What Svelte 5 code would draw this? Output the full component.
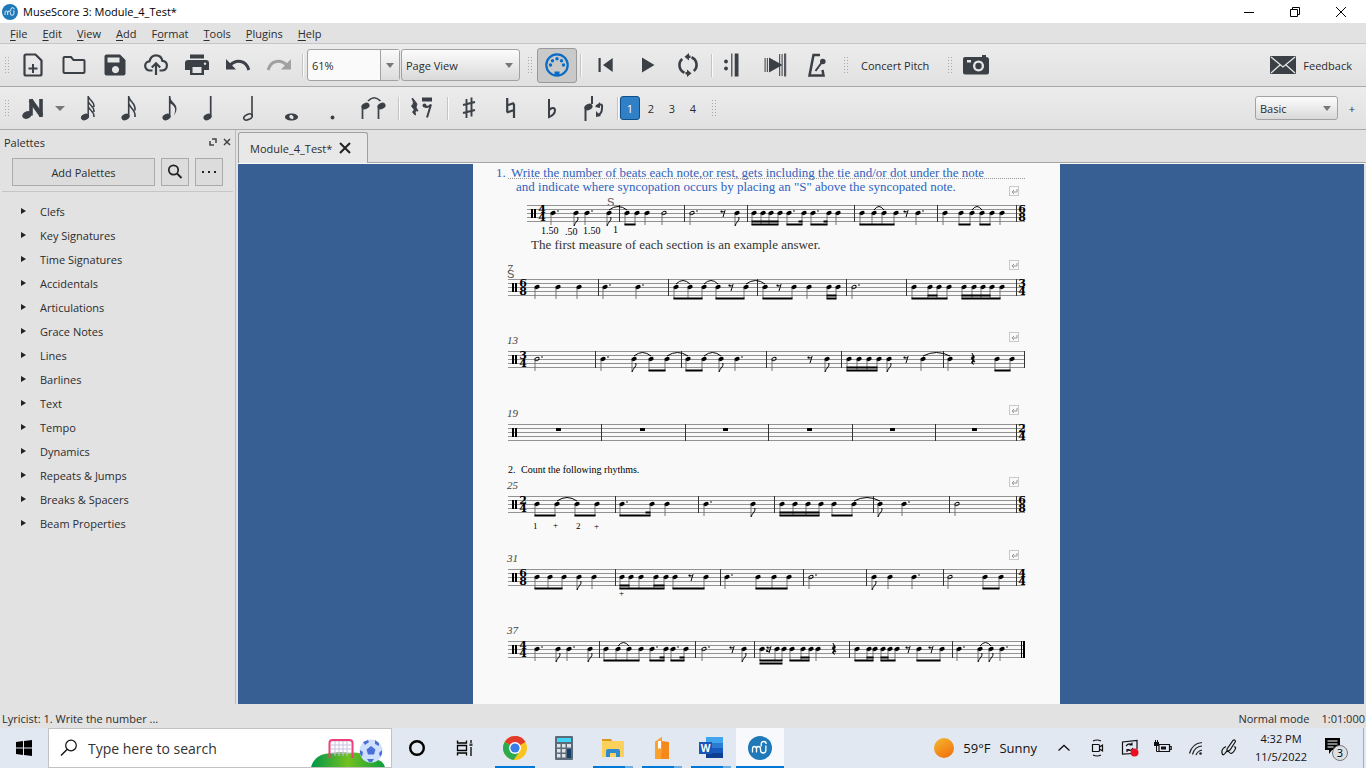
<script lang="ts">
  type System = {
    y: number;
    x?: number;
    num?: string;
    sig?: string;
    next?: string;
    bars: number[];
    notes: string;
    beams?: number[][];
    ties?: number[][];
    end?: boolean;
  };

  const menus = ["File", "Edit", "View", "Add", "Format", "Tools", "Plugins", "Help"];
  const accel: Record<string, number> = { Format: 1 };

  const palettes = [
    "Clefs", "Key Signatures", "Time Signatures", "Accidentals", "Articulations",
    "Grace Notes", "Lines", "Barlines", "Text", "Tempo", "Dynamics",
    "Repeats & Jumps", "Breaks & Spacers", "Beam Properties",
  ];

  const fileTools = ["new", "open", "save", "cloud", "print", "undo", "redo"];
  const playTools = ["rewind", "play", "loop"];
  const viewTools = ["repeat", "pan", "metronome"];
  const durations = ["n32", "n16", "n8", "n4", "n2", "n1", "dot", "tie"];
  const accidentals = ["sharp", "natural", "flat", "flip"];
  const tasks = [
    { id: "cortana" }, { id: "taskview" }, { id: "chrome", open: true }, { id: "calc" },
    { id: "folder", open: true, stack: true }, { id: "office", open: true, stack: true },
    { id: "word", open: true, stack: true }, { id: "muse", open: true, active: true },
  ];
  const tray = ["up", "meet", "sync", "battery", "wifi", "pen"];

  let voice = $state(1);
  let zoom = $state("61%");

  const ink = "#3b3f46";
  const head = (x: number, y: number) =>
    `<ellipse cx="${x}" cy="${y}" rx="4.2" ry="3.1" transform="rotate(-24 ${x} ${y})"/>`;

  // 24x24 glyphs
  const icons: Record<string, string> = {
    new: `<path d="M5 1.500h9.5L20.500 7.500v13.500q0 1.500-1.500 1.500H5q-1.500 0-1.500-1.500V3q0-1.500 1.500-1.500z" fill="none" stroke="${ink}" stroke-width="2.200"/><path d="M12 11v9M7.500 15.500h9" stroke="${ink}" stroke-width="2"/>`,
    open: `<path d="M2.500 4h6.500l2.500 3h10q1 0 1 1v11q0 1-1 1h-19q-1 0-1-1V5q0-1 1-1z" fill="none" stroke="${ink}" stroke-width="2"/>`,
    save: `<path fill-rule="evenodd" d="M3.500 1.500H17L22.500 7v13.500q0 2-2 2h-17q-2 0-2-2v-17q0-2 2-2zM4.500 4.500v5h12v-5zM12.500 13a3.600 3.600 0 1 0 .01 0z"/>`,
    cloud: `<path d="M8.500 17.500H6a4.600 4.600 0 0 1-.5-9.200C6.500 4 9 2.300 12 2.300s5.700 2 6.300 5.500c3 .2 4.600 2.300 4.600 4.800 0 2.900-2 4.900-4.900 4.900h-2.500" fill="none" stroke="${ink}" stroke-width="2.200"/><path d="M12 22V11M7.800 14.500 12 10.300l4.200 4.200" fill="none" stroke="${ink}" stroke-width="2.200"/>`,
    print: `<path d="M5 1.500h14v4H5z"/><path fill-rule="evenodd" d="M3 7h18q3 0 3 3v7h-5v5H5v-5H0v-7q0-3 3-3zM7.500 14v6h9v-6zM20 9.500a1.200 1.200 0 1 0 .01 0z"/>`,
    undo: `<path d="M0 6v10.500h10z"/><path d="M4 12.500C10 6 20 7 22.800 17" fill="none" stroke="${ink}" stroke-width="3"/>`,
    redo: `<g fill="#a0a0a0"><path d="M24 6v10.500H14z"/><path d="M20 12.500C14 6 4 7 1.200 17" fill="none" stroke="#a0a0a0" stroke-width="3"/></g>`,
    midi: `<g fill="#0a6cc4"><circle cx="12" cy="12" r="10.700" fill="none" stroke="#0a6cc4" stroke-width="2.200"/><circle cx="5.500" cy="12" r="1.700"/><circle cx="7.500" cy="7.800" r="1.700"/><circle cx="12" cy="5.800" r="1.700"/><circle cx="16.500" cy="7.800" r="1.700"/><circle cx="18.500" cy="12" r="1.700"/><path d="M9.500 18.500h5V23h-5z"/></g>`,
    rewind: `<path d="M4.500 5h2.200v14H4.500zM18.700 5v14L9 12z"/>`,
    play: `<path d="M7 4.500v15L19.500 12z"/>`,
    loop: `<path d="M8.500 19.800A8.300 8.300 0 0 1 6.200 6M15.500 4.200A8.300 8.300 0 0 1 17.800 18M9.500 20.300h3M14.500 3.700h-3" fill="none" stroke="${ink}" stroke-width="2.600"/><path d="M13 0v7.500L8.500 3.700zM11 24v-7.500l4.500 3.800z"/>`,
    repeat: `<circle cx="1" cy="8.500" r="1.900"/><circle cx="1" cy="15.500" r="1.900"/><path d="M6 .5h1.500v23H6z" opacity=".8"/><path d="M9.700.5h3.800v23H9.700z"/>`,
    pan: `<path d="M3 4.500v15L16.500 12z"/><path d="M-1.500 5h1.200v14h-1.200zM.8 5H2v14H.8zM13 1h1.200v22H13zM15.500 1h1.200v22h-1.200zM18 .5h2.200v23H18z" opacity=".85"/>`,
    metronome: `<path d="M13 2H6.500L2.500 22.500h14l-1-5.500" fill="none" stroke="${ink}" stroke-width="2.500"/><path d="M8.500 18 16.500 7" stroke="${ink}" stroke-width="2"/><circle cx="15.800" cy="8.500" r="2.800"/>`,
    camera: `<path fill-rule="evenodd" d="M1 4h17V2h4v2q3 0 3 2.500v13q0 2-2 2H1q-2 0-2-2V6q0-2 2-2zM3 7v2.500h4V7zM14.500 7.500a5.500 5.500 0 1 0 .01 0z"/><circle cx="14.500" cy="13" r="3.200"/>`,
    N: `<path d="M10 19.500V3M20 21V3" stroke="${ink}" stroke-width="3.600"/><path d="M9.500 4 20.500 19.500" stroke="${ink}" stroke-width="4.600"/><ellipse cx="6" cy="19" rx="5" ry="3.600" transform="rotate(-25 6 19)"/>`,
    n32: `${head(9, 21)}<path d="M12.200 21V0M12.500 1c1 3.500 6 4 5.500 10M12.500 6c1 3.500 6 4 5.500 10M12.500 11c1 3.500 6 4 5.500 10" fill="none" stroke="${ink}" stroke-width="1.500"/>`,
    n16: `${head(8.500, 21)}<path d="M11.700 21V0M12 1.500c1 4.500 7 5.500 6 13M12 8c1 4.500 7 5.500 6 13" fill="none" stroke="${ink}" stroke-width="1.600"/>`,
    n8: `${head(8.500, 21)}<path d="M11.700 21V0" stroke="${ink}" stroke-width="1.600"/><path d="M12 1c1 5 6.500 6.500 6.500 11.500 0 3.500-1.500 5-2.500 7 .5-2.500 1.500-4 1-7C16 9.500 13.500 8 12 7.500z"/>`,
    n4: `${head(8.500, 21)}<path d="M11.700 21V0" stroke="${ink}" stroke-width="1.700"/>`,
    n2: `<ellipse cx="8" cy="21" rx="4.500" ry="2.600" transform="rotate(-26 8 21)" fill="none" stroke="${ink}" stroke-width="1.600"/><path d="M12 20V0" stroke="${ink}" stroke-width="1.600"/>`,
    n1: `<path fill-rule="evenodd" d="M10.500 17.500c3.500 0 6.500 1.300 6.500 3.500s-3 3.500-6.500 3.500S4 23.200 4 21s3-3.500 6.500-3.500zm-.8 1.200c-2 .5-2 3.500 1.500 4.500 2-.5 2-3.800-1.500-4.500z"/>`,
    dot: `<circle cx="10.500" cy="21.500" r="1.900"/>`,
    tie: `<g transform="translate(-2 0)">${head(4.500, 10)}${head(20.500, 10)}<path d="M1.500 10.500V23M17.500 10.500V23M7 5q6-6.500 12.500 0" fill="none" stroke="${ink}" stroke-width="1.700"/></g>`,
    rest: `<g transform="translate(-1 0)"><path d="M1.500 2 6 8q-2.500 3 1 7-4-1-2.500 4-5-3-1-5L.5 10Q4 7 1 3z" stroke="${ink}"/><path d="M11 1.500h10v4H11z"/><circle cx="13.500" cy="9.500" r="2"/><path d="M14 11q4 .5 6-2.500L16 21.500" fill="none" stroke="${ink}" stroke-width="2"/></g>`,
    sharp: `<path d="M5.500 3v19M10.500 1.500v19M2 9l12-3M2 17l12-3" fill="none" stroke="${ink}" stroke-width="1.900"/>`,
    natural: `<path d="M5.200 2v14.500M12 7.500V22M5 9.500l7-2.500M5 16.500l7-2.500" fill="none" stroke="${ink}" stroke-width="2.200"/>`,
    flat: `<path d="M6 3v18q6-2.500 6-6.500c0-3-3.500-3.500-5.500-.5" fill="none" stroke="${ink}" stroke-width="2"/>`,
    flip: `${head(4.500, 11)}<path d="M1.500 11v14M8 0v8" stroke="${ink}" stroke-width="2"/><path d="M12 10q7-4 6 2 0 6-4 7" fill="none" stroke="${ink}" stroke-width="2"/><path d="M16 6v6l-5-1zM12 15v6l5-1z"/>`,
    search: `<circle cx="10.500" cy="10" r="4.700" fill="none" stroke="#222" stroke-width="1.700"/><path d="m14 13.500 4.500 4.500" stroke="#222" stroke-width="2"/>`,
    more: `<path d="M5 11h2v2H5zM11 11h2v2h-2zM17 11h2v2h-2z" fill="#222"/>`,
    cortana: `<circle cx="12" cy="12" r="6.800" fill="none" stroke="#000" stroke-width="2.400"/>`,
    taskview: `<path d="M3.500 4.500V7h9V4.500M3.500 19.500V17h9v2.500M3.500 9.500h9v5h-9zM17 4v3M17 11v9" fill="none" stroke="#000" stroke-width="1.300"/><path d="M15.500 7.500h3V10h-3z"/>`,
    chrome: `<circle cx="12" cy="12" r="12" fill="#f9c51c"/><path d="M12 12 1.600 6A12 12 0 0 1 22.400 6z" fill="#e33b2e"/><path d="M12 12 1.600 6a12 12 0 0 0 9 17.900L17 15z" fill="#2da94f"/><path d="M12 6h10.400A12 12 0 0 0 12 0z" fill="#e33b2e"/><circle cx="12" cy="12" r="6" fill="#fff"/><circle cx="12" cy="12" r="4.600" fill="#3a7de8"/>`,
    calc: `<rect x="3" width="18" height="24" rx="1" fill="#5d6b78"/><path d="M5 2h14v4H5z" fill="#3fd3f5"/><g fill="#dde3e8"><path d="M5 8h3.500v3.500H5zM10 8h3.500v3.500H10zM15 8h4v3.500h-4zM5 13h3.500v3.500H5zM10 13h3.500v3.500H10zM5 18h3.500v3.500H5zM10 18h3.500v3.500H10z"/></g><path d="M15 13h4v9h-4z" fill="#123f6b"/>`,
    folder: `<path d="M1 3h9l2 3H1z" fill="#d99a1b"/><path d="M1 5h22v16H1z" fill="#fbd15b"/><path d="M5 21v-6q0-2 2-2h10q2 0 2 2v6h-4v-4H9v4z" fill="#2f8bd0"/>`,
    office: `<path d="M5 6 12 1v4l7 1v17H5z" fill="#f58a1c"/><path d="M5 6 12 1v5l-1 17H5z" fill="#fca12b"/><path d="M8 5h3v8l-1.500-1L8 13z" fill="#fff"/>`,
    word: `<path d="M7 1h17v6H7z" fill="#41a5ee"/><path d="M7 7h17v5H7z" fill="#2b7cd3"/><path d="M7 12h17v5H7z" fill="#185abd"/><path d="M7 17h17v5H7z" fill="#103f91"/><path d="M0 6h13v12H0z" fill="#1a55b8"/><text x="6.500" y="15.500" font-family="Open Sans, sans-serif" font-size="10" font-weight="700" text-anchor="middle" fill="#fff">W</text>`,
    muse: `<circle cx="12" cy="12" r="12" fill="#1f78b8"/><path d="M4.500 16.500V13q0-2.500 2-2.500t2 2.500v3.500M8.500 13q0-2.500 2-2.500t2 2.500v1q0 3 2.700 3t2.700-3V9.500M13.200 10.500V8.500q0-3 2.500-3t2.500 2.500" fill="none" stroke="#fff" stroke-width="1.300"/>`,
    up: `<path d="m6.500 14.500 5.500-5 5.500 5" fill="none" stroke="#111" stroke-width="1.300"/>`,
    meet: `<path d="M7.500 8.500h6q1 0 1 1v5q0 1-1 1h-6zM14.500 11l3-2v6l-3-2M8 5q4-2 8 0M8 19q4 2 8 0" fill="none" stroke="#111" stroke-width="1.200"/>`,
    sync: `<path d="M15 17.500 4.500 18V6L19 4.500V13" fill="none" stroke="#111" stroke-width="1.200"/><path d="M8 10q3-3.500 6-1M15 12q-2.500 4-6 1.500M14 6.500V9h-2.500M9 16v-2.500h2.500" fill="none" stroke="#111" stroke-width="1.200"/><circle cx="16.500" cy="16.500" r="4" fill="#e81123"/>`,
    battery: `<path d="M8 8.500h10.500v7H8zM19 10.500h1.200v3H19" fill="none" stroke="#111" stroke-width="1.200"/><path d="M10 10.500h5v3h-5zM3 6h5v4H3z" fill="#111"/><path d="M4.500 4v2M6.500 4v2M5.500 10v5.500h3" fill="none" stroke="#111"/>`,
    wifi: `<path d="M5.500 17.500Q8 7.500 18 6.500M8.500 18.500Q10.500 10.500 18 10M12 19q1.500-4 6-5" fill="none" stroke="#222" stroke-width="1.200"/><circle cx="16.500" cy="17.500" r="1.300" fill="#222"/>`,
    pen: `<path d="m10 13 6-8.500q2-1.500 2.500 1L13 14l-3 1.500zM9 10.500q-5 2.500-4 6.500t4-1q1.500-2 3.500.5t5-2q2.500-4-.5-3.500" fill="none" stroke="#111" stroke-width="1.200"/>`,
  };

  const systems: System[] = [
    {
      y: 213, x: 527, sig: "44", next: "68",
      bars: [619, 684, 747, 854, 937, 1016],
      notes: "q.553 e576 q.587 e609 n627 n637 q647 h664 h.692 r723 e737 n754 n763 n771 n780 n.789 n804 n.813 n829 q838 n862 n874 n884 n896 r906 q.918 q945 n961 n972 n982 n992 q1002",
      beams: [[627, 637], [754, 780], [754, 780, 1], [789, 804], [801, 804, 1], [813, 829], [826, 829, 1], [862, 896], [961, 972], [982, 992]],
      ties: [[609, 627], [874, 884], [972, 982]],
    },
    {
      y: 287, num: "7", sig: "68", next: "34",
      bars: [598, 668, 757, 846, 906, 1016],
      notes: "q537 q558 q579 q.605 q.638 n676 n690 n704 n718 r731 n746 n765 r779 n794 q809 n829 n838 h.854 n914 n930 n939 n949 n964 n974 n983 n992 n1002",
      beams: [[676, 704], [718, 746], [765, 794], [829, 838], [829, 838, 1], [914, 949], [930, 939, 1], [964, 1002], [964, 992, 1]],
      ties: [[676, 690], [704, 718], [746, 765]],
    },
    {
      y: 359, num: "13", sig: "34",
      bars: [595, 681, 766, 841, 943, 1024],
      notes: "h.537 q.603 e634 n651 n667 n688 n704 e721 q.737 h774 r810 e827 n849 n859 n869 n879 e889 r906 q923 q950 R973 n997 n1012",
      beams: [[651, 667], [688, 704], [849, 879], [849, 879, 1], [997, 1012]],
      ties: [[634, 651], [667, 688], [704, 721], [923, 950]],
    },
    {
      y: 432, num: "19", next: "24",
      bars: [601, 685, 768, 852, 935, 1016],
      notes: "w559 w643 w726 w810 w893 w975",
    },
    {
      y: 504, num: "25", sig: "24", next: "68",
      bars: [615, 698, 774, 873, 949, 1016],
      notes: "n537 n557 n577 n597 n.622 n652 q667 q.706 e753 n782 n795 n808 n821 n834 n854 e880 q.904 h957",
      beams: [[537, 557], [577, 597], [622, 652], [648, 652, 1], [782, 821], [782, 821, 1], [834, 854]],
      ties: [[557, 577], [854, 880]],
    },
    {
      y: 577, num: "31", sig: "68", next: "44",
      bars: [615, 720, 803, 866, 943, 1016],
      notes: "n537 n550 n564 e579 q594 n622 n631 n641 n656 n666 n675 r691 n706 q.727 n758 n774 n789 h.811 e874 q890 q.914 h950 n985 n1001",
      beams: [[537, 564], [622, 666], [622, 631, 1], [656, 666, 1], [675, 706], [758, 789], [985, 1001]],
    },
    {
      y: 649, num: "37", sig: "44", end: true,
      bars: [599, 695, 754, 849, 952],
      notes: "q.537 e558 q.569 e590 n606 n618 n629 n641 n.652 n666 n.673 n686 h.704 r732 e744 n762 s769 n777 n784 n792 n803 n811 q818 R834 n857 n869 n875 n883 n890 n897 r908 n919 r931 n942 q.959 e980 e991 q.1002",
      beams: [[606, 641], [652, 666], [662, 666, 1], [673, 686], [682, 686, 1], [762, 784], [762, 784, -1], [792, 811], [803, 811, 1], [857, 875], [869, 875, 1], [883, 897], [883, 890, 1], [919, 942]],
      ties: [[618, 629], [980, 991]],
    },
  ];

  const parse = (s: string) =>
    [...s.matchAll(/([a-zR])(\.?)(\d+)/g)].map((m) => ({ kind: m[1], dotted: m[2] === ".", x: +m[3] }));
</script>

{#snippet icon(name: string, size = 24)}
  <svg class="icon" width={size} height={size} viewBox="0 0 24 24" aria-hidden="true">{@html icons[name]}</svg>
{/snippet}

{#snippet tool(name: string)}
  <button class="tool" aria-label={name}>{@render icon(name)}</button>
{/snippet}

{#snippet timesig(sig: string, x: number, y: number)}
  <text class="sig" {x} {y}>{sig[0]}</text>
  <text class="sig" {x} y={y + 8}>{sig[1]}</text>
{/snippet}

<div class="window">
  <header class="titlebar">
    {@render icon("muse", 16)}
    <h1>MuseScore 3: Module_4_Test*</h1>
    <div class="winbtns">
      <button aria-label="Minimize"><svg width="12" height="12"><path d="M1 6.500h10" /></svg></button>
      <button aria-label="Restore"><svg width="12" height="12"><path d="M1.500 3.500h7v7h-7zM3.500 3.500v-2h7v7h-2" /></svg></button>
      <button aria-label="Close"><svg width="12" height="12"><path d="m1 1 10 10M11 1 1 11" /></svg></button>
    </div>
  </header>

  <nav class="menubar">
    {#each menus as m}
      {@const k = accel[m] ?? 0}
      <button>{m.slice(0, k)}<u>{m[k]}</u>{m.slice(k + 1)}</button>
    {/each}
  </nav>

  <div class="toolbar">
    <span class="grip"></span>
    {#each fileTools as t}{@render tool(t)}{/each}
    <span class="sep"></span>
    <div class="combo">
      <input aria-label="Zoom" bind:value={zoom} />
      <button aria-label="Zoom levels"><i class="tri"></i></button>
    </div>
    <div class="select view">
      <select aria-label="View mode"><option>Page View</option></select><i class="tri"></i>
    </div>
    <span class="grip wide"></span>
    <button class="midi" aria-label="MIDI input" aria-pressed="true">{@render icon("midi")}</button>
    <span class="sep"></span>
    {#each playTools as t}{@render tool(t)}{/each}
    <span class="sep"></span>
    {#each viewTools as t}{@render tool(t)}{/each}
    <span class="grip"></span>
    <button class="plain">Concert Pitch</button>
    <span class="grip"></span>
    {@render tool("camera")}
    <button class="feedback">
      <svg width="26" height="18" aria-hidden="true"><rect width="26" height="18" rx="1" /><path d="m1 1 12 10L25 1M1 17l9-8M25 17l-9-8" fill="none" stroke="#e6e6e6" stroke-width="1.300" /></svg>
      Feedback
    </button>
  </div>

  <div class="toolbar">
    <span class="grip"></span>
    {@render tool("N")}
    <button class="drop" aria-label="Input mode"><i class="tri big"></i></button>
    {#each durations as t}{@render tool(t)}{/each}
    <span class="sep"></span>
    {@render tool("rest")}
    <span class="sep"></span>
    {#each accidentals as t}{@render tool(t)}{/each}
    <span class="sep thin"></span>
    {#each [1, 2, 3, 4] as v}
      <button class="voice" class:on={voice === v} onclick={() => (voice = v)}>{v}</button>
    {/each}
    <span class="grip wide"></span>
    <div class="select workspace">
      <select aria-label="Workspace"><option>Basic</option></select><i class="tri"></i>
    </div>
    <button class="add" aria-label="Add workspace">+</button>
  </div>

  <main>
    <aside>
      <div class="dock">
        <h2>Palettes</h2>
        <button aria-label="Float"><svg width="8" height="8"><path d="M3 1h4v4M1 3v4h4" /></svg></button>
        <button aria-label="Close palettes"><svg width="8" height="8"><path d="m1 1 6 6M7 1 1 7" /></svg></button>
      </div>
      <div class="actions">
        <button class="grow">Add Palettes</button>
        <button aria-label="Search">{@render icon("search")}</button>
        <button aria-label="More">{@render icon("more")}</button>
      </div>
      <ul>
        {#each palettes as p}
          <li><button><i></i>{p}</button></li>
        {/each}
      </ul>
    </aside>

    <section class="editor">
      <div class="tabs">
        <div class="tab">
          <span>Module_4_Test*</span>
          <button aria-label="Close tab"><svg width="12" height="12"><path d="m1 1 10 10M11 1 1 11" /></svg></button>
        </div>
      </div>
      <div class="canvas">
        <svg class="page" viewBox="473 164 587 540" width="587" height="540">
          <g class="lyricist">
            <text x="496" y="177">1.</text>
            <text x="511" y="177">Write the number of beats each note,or rest, gets including the tie and/or dot under the note</text>
            <text x="516" y="191">and indicate where syncopation occurs by placing an "S" above the syncopated note.</text>
          </g>
          <path d="M508 178.500H1025" stroke="#999" stroke-dasharray="1 1" />
          <text class="note" x="531" y="249">The first measure of each section is an example answer.</text>
          <text class="mark" x="607" y="206">S</text>
          <text class="mark" x="507" y="278">S</text>
          <g class="count">
            <text x="541" y="234">1.50</text>
            <text x="565" y="235">.50</text>
            <text x="583" y="234">1.50</text>
            <text x="613" y="233">1</text>
            <text class="sm" x="533" y="529">1</text>
            <text class="sm" x="553" y="528">+</text>
            <text class="sm" x="576" y="529">2</text>
            <text class="sm" x="594" y="529">+</text>
            <text class="sm" x="619" y="596">+</text>
            <text x="508" y="473">2.</text>
            <text x="521" y="473">Count the following rhythms.</text>
          </g>

          {#each systems as s}
            {@const x0 = s.x ?? 508}
            {#if s.num}<text class="num" x="507" y={s.y - 15}>{s.num}</text>{/if}
            {#each [-8, -4, 0, 4, 8] as d}
              <path d="M{x0} {s.y + d + 0.5}H1025" stroke="#929292" />
            {/each}
            <path d="M{x0 + 4} {s.y - 4}h2v9h-2zM{x0 + 7} {s.y - 4}h2v9h-2z" />
            {#if s.sig}{@render timesig(s.sig, x0 + 15, s.y)}{/if}
            {#if s.next}{@render timesig(s.next, 1022, s.y)}{/if}
            {#each s.bars as b}
              <path d="M{b + 0.5} {s.y - 8}v17" stroke="#333" />
            {/each}
            {#if s.end}<path d="M1021 {s.y - 8}h1v17h-1zM1023 {s.y - 8}h2v17h-2z" />{/if}

            {#each parse(s.notes) as n}
              <g transform="translate({n.x} {s.y})">
                {#if n.kind === "r" || n.kind === "s"}
                  <circle cx="-1.500" cy="-1.500" r="1.100" />
                  <path d="M-1.500-1Q1-.5 2-2.500L0 4" class="line" />
                  {#if n.kind === "s"}<circle cx="-2" cy="2" r="1.100" /><path d="M-2 2.500Q0 3 1 1" class="line" />{/if}
                {:else if n.kind === "R"}
                  <path d="M-1-6 1.500-2Q-.5 0 2 3-2 2 .5 5.500-3 4-.5 1.500L-2-1Q1-3-1-6z" stroke="#000" stroke-width=".6" />
                {:else if n.kind === "w"}
                  <path d="M-3-4h5v3h-5z" />
                {:else}
                  {#if n.kind === "h"}
                    <ellipse rx="2.300" ry="1.500" transform="rotate(-25)" fill="none" stroke="#000" />
                  {:else}
                    <ellipse rx="2.800" ry="2" transform="rotate(-25)" />
                  {/if}
                  <path d="M-2 1V{n.kind === 'e' ? 13 : 12}" stroke="#666" stroke-width=".9" />
                  {#if n.kind === "e"}<path d="M-2 13Q-1 10 1 8 2.500 6.500 1.800 4" class="line" />{/if}
                {/if}
                {#if n.dotted}<circle cx="5" cy="-2" r=".8" />{/if}
              </g>
            {/each}
            {#each s.beams ?? [] as [a, b, lv = 0]}
              <path d="M{a - 2.5} {s.y + 10.5 - lv * 3}H{b - 1.5}v2H{a - 2.5}z" />
            {/each}
            {#each s.ties ?? [] as [a, b]}
              <path d="M{a} {s.y - 3}Q{(a + b) / 2} {s.y - 10} {b} {s.y - 3}" class="line" />
            {/each}
            {#if !s.end}
              <g transform="translate(1009 {s.y - 27})" fill="none" stroke="#999">
                <rect x=".5" y=".5" width="9" height="9" stroke-dasharray="1 1" />
                <path d="M8 3v3H3M5 4 3 6l2 2" />
              </g>
            {/if}
          {/each}
        </svg>
      </div>
    </section>
  </main>

  <footer class="status">
    <span>Lyricist: 1. Write the number ...</span>
    <span class="mode">Normal mode</span>
    <span>1:01:000</span>
  </footer>

  <div class="taskbar">
    <button class="start" aria-label="Start">
      <svg width="16" height="16"><path d="M0 2 7 1v6.500H0zM8 1l8-1v7.500H8zM0 8.500h7V15l-7-1zM8 8.500h8V16l-8-1z" /></svg>
    </button>
    <div class="find">
      <svg width="18" height="18" aria-hidden="true"><circle cx="11" cy="6.500" r="5.300" fill="none" stroke="#111" stroke-width="1.200" /><path d="m7 10.500-6 6" stroke="#111" stroke-width="1.400" /></svg>
      <input type="text" aria-label="Search" placeholder="Type here to search" />
      <svg class="soccer" width="78" height="38" aria-hidden="true">
        <defs><linearGradient id="hill"><stop offset="0" stop-color="#00964a" /><stop offset=".5" stop-color="#73c020" /><stop offset="1" stop-color="#0b9f3c" /></linearGradient></defs>
        <path d="M0 38Q4 24 22 24q8-2 16 0 14-2 22 6 12 0 14 8z" fill="url(#hill)" />
        <path d="M20 12h20M20 16h20M20 20h20M20 24h20M24 11v16M28 11v16M32 11v16M36 11v16" stroke="#c9bfe0" fill="none" />
        <path d="M18.500 29V14q0-3 3-3h17q3 0 3 3v15" fill="none" stroke="#ef3f78" stroke-width="2" />
        <circle cx="60" cy="22" r="11.500" fill="#cfe0ff" />
        <path d="m60 17 4.500 3.500-1.500 5h-6l-1.500-5zM52 13l5-2 1 2-4 3zM64 11l4 3 0 3-4-2zM49 21l3 2-1 5-2-3zM71 21l-3 3 1 4 2-3zM56 30h7l-2 3h-3z" fill="#4b6fd6" />
      </svg>
    </div>
    {#each tasks as t}
      <button class="task" class:open={t.open} class:stack={t.stack} class:active={t.active} aria-label={t.id}>{@render icon(t.id)}</button>
    {/each}
    <div class="tray">
      <button class="weather"><i></i><span>59°F</span><span>Sunny</span></button>
      {#each tray as t}
        <button class="trayicon" aria-label={t}>{@render icon(t)}</button>
      {/each}
      <button class="clock"><span>4:32 PM</span><span>11/5/2022</span></button>
      <button class="notes" aria-label="Notifications">
        <svg width="26" height="26" aria-hidden="true"><path d="M1 3h15v12H8l-3 4v-4H1z" /><path d="M3.500 6h10M3.500 9h10M3.500 12h6" stroke="#fff" /><circle cx="16" cy="18" r="7.500" fill="#dcdfe4" stroke="#777" /><text x="16" y="22" text-anchor="middle">3</text></svg>
      </button>
    </div>
  </div>
</div>

<style>
  :global(body) { background: #e2e2e2; }
  .window {
    display: flex; flex-direction: column; height: 100vh; overflow: hidden;
    font-family: "Open Sans", "Noto Sans", sans-serif; font-size: 11px; color: #2c2c2c; background: #e2e2e2;
  }
  button, input, select { font: inherit; color: inherit; border: none; background: none; padding: 0; margin: 0; }
  h1, h2 { margin: 0; font-size: 11px; font-weight: 400; }
  svg { display: block; flex: none; }
  .icon { fill: #3b3f46; overflow: visible; }

  .titlebar { display: flex; align-items: center; height: 23px; padding-left: 2px; gap: 5px; background: #fff; color: #000; flex: none; }
  .winbtns { display: flex; margin-left: auto; padding-right: 2px; }
  .winbtns button { width: 46px; height: 20px; display: grid; place-items: center; }
  .winbtns svg { fill: none; stroke: #000; }

  .menubar { display: flex; height: 20px; padding-left: 3px; gap: 1px; border-bottom: 1px solid #c6c6c6; flex: none; }
  .menubar button { padding: 0 7px; }
  u { text-underline-offset: 2px; }

  .toolbar {
    display: flex; align-items: center; height: 42px; flex: none;
    background: linear-gradient(#ececec, #e1e1e1); border-bottom: 1px solid #a9a9a9;
  }
  .tool { width: 41px; height: 34px; display: grid; place-items: center; flex: none; }
  .grip { width: 12px; height: 18px; flex: none; background: radial-gradient(circle, #aaa 1px, transparent 1px) 4px 0 / 3px 3px repeat-y; }
  .grip::after { content: ""; display: block; width: 3px; height: 18px; margin-left: 7px; background: radial-gradient(circle, #aaa 1px, transparent 1px) 0 0 / 3px 3px; }
  .grip.wide { width: 14px; margin-left: 3px; }
  .sep { width: 1px; height: 23px; margin: 0 3px; background: #c4c4c4; border-right: 1px solid #fafafa; flex: none; }
  .sep.thin { margin: 0 1px; }
  .tri { border: 4px solid transparent; border-top: 5px solid #777; border-bottom: 0; width: 0; height: 0; }
  .tri.big { border-width: 5px 5px 0; }
  .combo, .select { display: flex; height: 30px; border: 1px solid #a2a2a2; border-radius: 3px; flex: none; }
  .combo { width: 91px; background: #fafafa; margin-right: 1px; }
  .combo input { width: 72px; box-sizing: border-box; padding-left: 4px; }
  .combo button { flex: 1; display: grid; place-items: center; border-left: 1px solid #a2a2a2; background: linear-gradient(#fafafa, #dcdcdc); }
  .select { position: relative; background: linear-gradient(#fcfcfc, #d9d9d9); }
  .select select { appearance: none; width: 100%; padding-left: 4px; }
  .select .tri { position: absolute; right: 6px; top: 50%; margin-top: -2px; pointer-events: none; }
  .view { width: 117px; }
  .workspace { width: 81px; height: 22px; margin-left: auto; }
  .midi { width: 40px; height: 35px; box-sizing: border-box; display: grid; place-items: center; border: 1px solid #999; border-radius: 3px; background: #c9c9c9; }
  .plain { padding: 0 14px 0 10px; }
  .feedback { display: flex; align-items: center; gap: 7px; margin-left: auto; margin-right: 14px; }
  .feedback svg { fill: #3b3f46; }
  .drop { width: 14px; display: grid; place-items: center; }
  .voice { width: 20px; height: 24px; box-sizing: border-box; margin-right: 1px; border-radius: 3px; }
  .voice.on { background: #3080c8; color: #fff; border: 1px solid #104f8a; }
  .add { width: 28px; }

  main { display: flex; flex: 1; min-height: 0; }
  aside { width: 236px; box-sizing: border-box; border-right: 1px solid #bdbdbd; margin-right: 2px; flex: none; }
  .dock { display: flex; align-items: center; gap: 6px; height: 24px; padding: 0 4px; }
  .dock h2 { flex: 1; }
  .dock svg { fill: none; stroke: #444; stroke-width: 1.5; }
  .actions { display: flex; gap: 6px; padding: 4px 10px 5px; margin: 0 2px 7px; border-bottom: 1px solid #c6c6c6; }
  .actions button { width: 28px; height: 28px; box-sizing: border-box; display: grid; place-items: center; border: 1px solid #ababab; background: #dcdcdc; }
  .actions .grow { flex: 1; }
  ul { list-style: none; margin: 0; padding: 0 0 0 21px; }
  li button { display: flex; align-items: center; height: 24px; gap: 14px; }
  li i { border: 3px solid transparent; border-left: 5px solid #222; border-right: 0; }

  .editor { flex: 1; min-width: 0; display: flex; flex-direction: column; }
  .tabs { height: 34px; box-sizing: border-box; padding-top: 2px; display: flex; border-bottom: 1px solid #fafafa; }
  .tabs::after { content: ""; flex: 1; border-bottom: 1px solid #a6a6a6; }
  .tab { display: flex; align-items: center; gap: 7px; padding: 0 16px 0 11px; border: 1px solid #a0a0a0; border-bottom: none; border-radius: 3px 3px 0 0; background: #e8e8e8; }
  .tab svg { fill: none; stroke: #222; stroke-width: 2; }
  .canvas { flex: 1; min-height: 0; overflow: hidden; background: #375f93; margin-right: 2px; padding-left: 235px; }
  .page { background: #f9f9f9; font-family: "Liberation Serif", serif; }
  .lyricist { fill: #2f63bd; font-size: 13px; }
  .note { font-size: 13px; fill: #333; }
  .mark { font-family: "Liberation Sans", sans-serif; font-size: 11px; fill: #555; }
  .count { font-size: 10px; }
  .count .sm { font-size: 9px; }
  .num { font-size: 11px; font-style: italic; fill: #444; }
  .sig { font-family: "DejaVu Serif", serif; font-size: 11px; font-weight: 700; text-anchor: middle; }
  .line { fill: none; stroke: #000; stroke-width: 1; }

  .status { display: flex; align-items: center; height: 24px; padding: 4px 1px 0 2px; box-sizing: border-box; flex: none; }
  .mode { margin-left: auto; margin-right: 12px; }

  .taskbar { display: flex; height: 40px; flex: none; background: #e2e8f1; color: #111; }
  .start { width: 48px; display: grid; place-items: center; }
  .find { display: flex; align-items: center; width: 344px; box-sizing: border-box; padding-left: 11px; gap: 10px; margin-right: 1px; background: #fff; border: 1px solid #c2c2c2; flex: none; }
  .find input { flex: 1; min-width: 0; font-size: 14px; outline: none; }
  .find input::placeholder { color: #333; opacity: 1; }
  .soccer { margin-right: 2px; }
  .task { width: 48px; margin-right: 1px; display: grid; place-items: center; position: relative; }
  .task.active { background: #f7f9fc; }
  .task.open::after { content: ""; position: absolute; bottom: 0; left: 4px; right: 4px; height: 2px; background: #0078d7; }
  .task.stack::after { background: linear-gradient(90deg, #0078d7 80%, #6aaee8 80%); }
  .task.active::after { left: 0; right: 0; }
  .tray { display: flex; margin-left: auto; padding-right: 2px; }
  .weather { display: flex; align-items: center; gap: 9px; font-size: 13px; margin-right: 10px; }
  .weather i { width: 20px; height: 20px; border-radius: 50%; background: linear-gradient(150deg, #f5b92e, #f06a0c); }
  .trayicon { width: 33px; display: grid; place-items: center; }
  .clock { display: flex; flex-direction: column; justify-content: center; align-items: center; width: 72px; line-height: 18px; }
  .notes { width: 47px; padding-right: 6px; display: grid; place-items: center; border-right: 1px solid #aab; box-sizing: border-box; }
</style>
